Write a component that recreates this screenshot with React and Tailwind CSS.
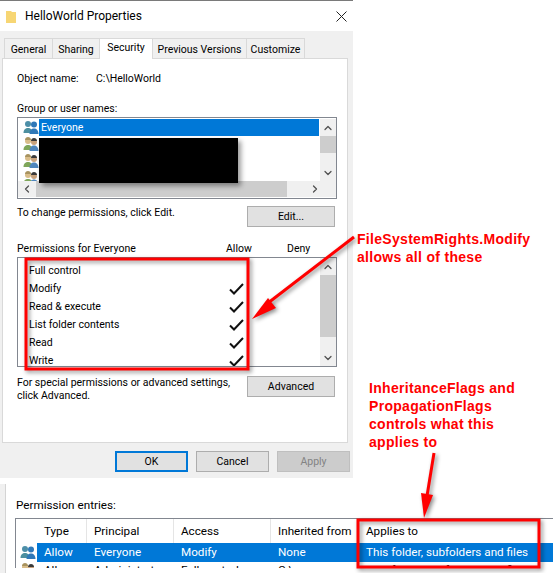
import { ChevronUp, ChevronDown, ChevronLeft, ChevronRight } from "lucide-react";

const perms = [
	{ name: "Full control", allow: false },
	{ name: "Modify", allow: true },
	{ name: "Read & execute", allow: true },
	{ name: "List folder contents", allow: true },
	{ name: "Read", allow: true },
	{ name: "Write", allow: true },
];

const columns = "grid grid-cols-[21px_50px_87px_97px_88px_1fr]";

function GroupIcon() {
	return (
		<svg width="16" height="15" viewBox="0 0 16 15" className="shrink-0">
			<circle cx="5" cy="4" r="3" fill="#d9bd8a" />
			<path d="M2 3c0-2 1.500-3 3-3s3 1 3 3z" fill="#a8935f" />
			<path d="M0.500 13c0-3.500 2-5 4.500-5s4.500 1.500 4.500 5z" fill="#7fa65a" />
			<circle cx="11" cy="5" r="3" fill="#c9a27c" />
			<path d="M8 4c0-2 1.500-3 3-3s3 1 3 3z" fill="#3a3a3a" />
			<path d="M6.500 14c0-3.500 2-5.500 4.500-5.500s4.500 2 4.500 5.500z" fill="#4f86bd" />
		</svg>
	);
}

function EveryoneIcon() {
	return (
		<svg width="16" height="15" viewBox="0 0 16 15" className="shrink-0">
			<circle cx="5" cy="4" r="3" fill="#4d8fa8" />
			<path d="M0.500 13c0-3.500 2-5 4.500-5s4.500 1.500 4.500 5z" fill="#4d8f9f" />
			<circle cx="11" cy="4.500" r="3" fill="#2f78b8" />
			<path d="M6.500 14c0-3.500 2-5.500 4.500-5.500s4.500 2 4.500 5.500z" fill="#2f78b8" />
		</svg>
	);
}

function Button({ children }) {
	return <button className="h-[21px] w-[88px] border border-[#adadad] bg-[#e1e1e1] pt-px text-center">{children}</button>;
}

function FooterButton({ children, className = "border border-[#adadad] bg-[#e1e1e1]" }) {
	return <button className={`h-[21px] w-[73px] pt-px text-center ${className}`}>{children}</button>;
}

function Tab({ children, className = "" }) {
	return (
		<div className={`-ml-px h-[20px] whitespace-nowrap border border-b-0 border-[#d9d9d9] bg-[#f0f0f0] text-center leading-[21px] first:ml-0 ${className}`}>
			{children}
		</div>
	);
}

function VScroll({ thumbClass }) {
	return (
		<div className="flex w-[16px] shrink-0 flex-col bg-[#f0f0f0]">
			<div className="flex h-[17px] items-center justify-center">
				<ChevronUp size={12} strokeWidth={2.5} color="#505050" />
			</div>
			<div className={`bg-[#cdcdcd] ${thumbClass}`} />
			<div className="flex-1" />
			<div className="flex h-[17px] items-center justify-center">
				<ChevronDown size={12} strokeWidth={2.5} color="#505050" />
			</div>
		</div>
	);
}

function Overlay() {
	return (
		<svg width="553" height="573" className="pointer-events-none absolute left-0 top-0 drop-shadow-[2px_2px_2px_rgba(0,0,0,0.45)]">
			<rect x="26" y="259" width="222" height="110" fill="none" stroke="#ff0000" strokeWidth="3" />
			<rect x="358" y="520" width="181" height="47" fill="none" stroke="#ff0000" strokeWidth="3" />
			<path d="M354 237L268 303" stroke="#ff0000" strokeWidth="3" fill="none" />
			<path d="M252 319L268 298L276 308z" fill="#ff0000" />
			<path d="M434 453L427 496" stroke="#ff0000" strokeWidth="3" fill="none" />
			<path d="M424 518L421 493L433 495z" fill="#ff0000" />
		</svg>
	);
}

export default function App() {
	return (
		<div className="relative h-[573px] w-[553px] overflow-hidden bg-white font-['Roboto',sans-serif] text-[10.5px] leading-[16px] text-black">
			<div className="h-[478px] w-[353px] border-t border-[#7a7a7a] bg-[#f0f0f0]">
				<div className="flex h-[30px] items-center bg-white px-[6px] text-[12px]">
					<svg width="10" height="13" viewBox="0 0 10 13" className="shrink-0">
						<path d="M0 1h5l1 1h4v11H0z" fill="#f7d674" />
					</svg>
					<span className="ml-[9px] flex-1">HelloWorld Properties</span>
					<svg width="11" height="11" viewBox="0 0 11 11">
						<path d="M0.500 0.500l10 10M10.500 0.500l-10 10" stroke="#222" strokeWidth="1" />
					</svg>
				</div>

				<div className="flex h-[27px] items-end pl-[4px]">
					<Tab className="w-[49px]">General</Tab>
					<Tab className="w-[48px]">Sharing</Tab>
					<div className="relative z-10 -mb-px -ml-px h-[21px] w-[54px] border border-b-0 border-[#d9d9d9] bg-white text-center leading-[18px]">
						Security
					</div>
					<Tab className="w-[95px]">Previous Versions</Tab>
					<Tab className="w-[59px]">Customize</Tab>
				</div>

				<div className="mx-[2px] h-[385px] w-[346px] border border-[#d9d9d9] bg-white px-[14px] pt-[12px]">
					<div className="flex">
						<span className="w-[79px]">Object name:</span>
						<span>C:\HelloWorld</span>
					</div>
					<div className="mt-[14px]">Group or user names:</div>

					<div className="relative flex h-[82px] w-[320px] flex-col border border-[#828790]">
						<div className="flex h-[63px] pt-px">
							<div className="flex-1 overflow-hidden">
								<div className="flex h-[17px] items-center pl-[5px]">
									<EveryoneIcon />
									<span className="mr-px flex h-[17px] flex-1 items-center bg-[#0078d7] pl-[2px] text-white">Everyone</span>
								</div>
								{[0, 1, 2].map((i) => (
									<div key={i} className="flex h-[17px] items-center pl-[5px]">
										<GroupIcon />
									</div>
								))}
							</div>
							<VScroll thumbClass="h-[17px]" />
						</div>
						<div className="flex h-[16px] items-center bg-[#f0f0f0]">
							<div className="flex w-[18px] justify-center">
								<ChevronLeft size={12} strokeWidth={2.5} color="#505050" />
							</div>
							<div className="h-full w-[251px] bg-[#cdcdcd]" />
							<div className="flex flex-1 justify-center pl-[6px]">
								<ChevronRight size={12} strokeWidth={2.5} color="#505050" />
							</div>
						</div>
						<div className="absolute left-[21px] top-[20px] h-[45px] w-[199px] bg-black shadow-[3px_3px_5px_rgba(0,0,0,0.4)]" />
					</div>

					<div className="mt-[5px] flex w-[318px] items-start justify-between">
						<span className="pt-px">To change permissions, click Edit.</span>
						<div className="mt-[2px]">
							<Button>Edit...</Button>
						</div>
					</div>

					<div className="mt-[14px] grid grid-cols-[209px_61px_auto]">
						<span>Permissions for Everyone</span>
						<span>Allow</span>
						<span>Deny</span>
					</div>

					<div className="flex h-[110px] w-[320px] border border-[#828790]">
						<div className="flex-1 overflow-hidden pl-[11px] pt-[4px]">
							{perms.map((p) => (
								<div key={p.name} className="grid h-[18px] grid-cols-[200px_auto] items-center">
									<span>{p.name}</span>
									{p.allow && (
										<svg width="15" height="12" viewBox="0 0 15 12">
											<path d="M1 6.500l4 4L14 1" stroke="#111" strokeWidth="2" fill="none" />
										</svg>
									)}
								</div>
							))}
						</div>
						<VScroll thumbClass="h-[62px]" />
					</div>

					<div className="mt-[8px] flex w-[318px] items-start justify-between">
						<div className="pt-px leading-[13px]">
							For special permissions or advanced settings,
							<br />
							click Advanced.
						</div>
						<div className="mt-px">
							<Button>Advanced</Button>
						</div>
					</div>
				</div>

				<div className="flex justify-end gap-[8px] pr-[3px] pt-[8px]">
					<FooterButton className="border-2 border-[#0078d7] bg-[#e1e1e1]">OK</FooterButton>
					<FooterButton>Cancel</FooterButton>
					<FooterButton className="border border-[#bfbfbf] bg-[#cccccc] text-[#838383]">Apply</FooterButton>
				</div>
			</div>

			<div className="mt-[6px] flex h-[89px] text-[11.7px]">
				<div className="w-[6px] shrink-0 border-r border-[#d4d4d4] bg-[#f0f0f0]" />
				<div className="min-w-0 flex-1 pl-[9px]">
					<div className="pl-[1px] pt-[13px]">Permission entries:</div>
					<div className="mt-[5px] h-[50px] overflow-hidden border-l border-t border-[#828790] leading-[19px]">
						<div className={`${columns} h-[24px] items-center`}>
							<span />
							<span className="h-full border-r border-[#e5e5e5] pl-[7px] leading-[25px]">Type</span>
							<span className="h-full border-r border-[#e5e5e5] pl-[7px] leading-[25px]">Principal</span>
							<span className="h-full border-r border-[#e5e5e5] pl-[7px] leading-[25px]">Access</span>
							<span className="h-full whitespace-nowrap pl-[7px] leading-[25px]">Inherited from</span>
							<span className="h-full pl-[7px] leading-[25px]">Applies to</span>
						</div>
						<div className={`${columns} h-[19px]`}>
							<span className="flex items-center pl-[4px]">
								<EveryoneIcon />
							</span>
							<span className="bg-[#0078d7] pl-[7px] text-white">Allow</span>
							<span className="bg-[#0078d7] pl-[7px] text-white">Everyone</span>
							<span className="bg-[#0078d7] pl-[7px] text-white">Modify</span>
							<span className="bg-[#0078d7] pl-[7px] text-white">None</span>
							<span className="whitespace-nowrap bg-[#0078d7] pl-[7px] text-white">This folder, subfolders and files</span>
						</div>
						<div className={`${columns} h-[19px] leading-[16px]`}>
							<span className="flex items-start pl-[4px] pt-px">
								<GroupIcon />
							</span>
							<span className="pl-[7px]">Allow</span>
							<span className="pl-[7px]">Administrators</span>
							<span className="pl-[7px]">Full control</span>
							<span className="pl-[7px]">C:\</span>
							<span className="whitespace-nowrap pl-[7px]">This folder, subfolders and files</span>
						</div>
					</div>
				</div>
			</div>

			<Overlay />

			<div className="absolute left-[357px] top-[230px] font-['Liberation_Sans',sans-serif] text-[14px] font-bold leading-[18px] tracking-[0.3px] text-[#ff0000]">
				FileSystemRights.Modify
				<br />
				allows all of these
			</div>
			<div className="absolute left-[369px] top-[379px] font-['Liberation_Sans',sans-serif] text-[14px] font-bold leading-[18px] tracking-[0.3px] text-[#ff0000]">
				InheritanceFlags and
				<br />
				PropagationFlags
				<br />
				controls what this
				<br />
				applies to
			</div>
		</div>
	);
}
